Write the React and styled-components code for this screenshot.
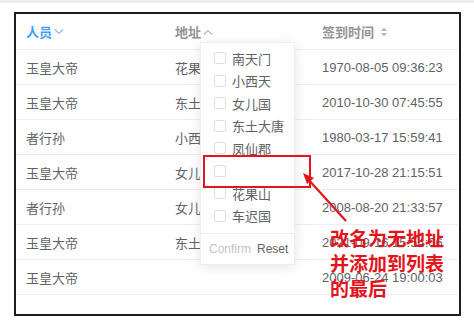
import React from 'react'
import styled, { createGlobalStyle } from 'styled-components'

const GlobalStyle = createGlobalStyle`
  body {
    margin: 0;
    background: #fff;
    font-family: "Liberation Sans", "Noto Sans CJK SC", sans-serif;
  }
`

const rows = [
  { name: '玉皇大帝', addr: '花果山', time: '1970-08-05 09:36:23' },
  { name: '玉皇大帝', addr: '东土大唐', time: '2010-10-30 07:45:55' },
  { name: '者行孙', addr: '小西天', time: '1980-03-17 15:59:41' },
  { name: '玉皇大帝', addr: '女儿国', time: '2017-10-28 21:15:51' },
  { name: '者行孙', addr: '女儿国', time: '2008-08-20 21:33:57' },
  { name: '玉皇大帝', addr: '东土大唐', time: '2021-09-16 15:54:06' },
  { name: '玉皇大帝', addr: '', time: '2009-06-24 19:00:03' },
]

const options = ['南天门', '小西天', '女儿国', '东土大唐', '凤仙郡', '', '花果山', '车迟国']

const App = () => {
  return (
    <>
      <GlobalStyle />
      <TopBar />
      <Frame>
        <Row header>
          <Cell>
            <HeadText active>人员</HeadText>
            <Chevron color="#8fb9ef" />
          </Cell>
          <Cell>
            <HeadText>地址</HeadText>
            <Chevron up color="#b4b7bd" />
          </Cell>
          <Cell>
            <HeadText>签到时间</HeadText>
            <SortCaret />
          </Cell>
        </Row>
        {rows.map((r, i) => (
          <Row key={i}>
            <Cell>{r.name}</Cell>
            <Cell>{r.addr}</Cell>
            <Cell>{r.time}</Cell>
          </Row>
        ))}

        <Popup>
          <OptionList>
            {options.map((o, i) => (
              <Option key={i}>
                <Box />
                <span>{o}</span>
              </Option>
            ))}
          </OptionList>
          <PopupFooter>
            <FooterBtn disabled>Confirm</FooterBtn>
            <FooterBtn>Reset</FooterBtn>
          </PopupFooter>
        </Popup>

        <Highlight />
        <Arrow width="60" height="60" viewBox="0 0 60 60">
          <line x1="48" y1="52" x2="9" y2="9" stroke="#e3141b" strokeWidth="2.2" />
          <polygon points="5,4 16,9 9,15" fill="#e3141b" />
        </Arrow>
        <Note>
          改名为无地址
          <br />
          并添加到列表
          <br />
          的最后
        </Note>
      </Frame>
    </>
  )
}

const Chevron = ({ up, color }) => (
  <ChevronSvg width="10" height="6" viewBox="0 0 10 6">
    <polyline
      points={up ? '1,5.5 5,1.5 9,5.5' : '1,0.5 5,4.5 9,0.5'}
      fill="none"
      stroke={color}
      strokeWidth="1.1"
    />
  </ChevronSvg>
)

const SortCaret = () => (
  <CaretSvg width="8" height="10" viewBox="0 0 8 10">
    <polygon points="4,0.5 7.5,4 0.5,4" fill="#b8bbc1" />
    <polygon points="0.5,6 7.5,6 4,9.5" fill="#b8bbc1" />
  </CaretSvg>
)

export default App

const TopBar = styled.div`
  height: 3px;
  background: #ececec;
`

const Frame = styled.div`
  position: relative;
  box-sizing: border-box;
  margin: 9px 0 0 14px;
  width: 447px;
  height: 304px;
  border: 2px solid #1e1e1e;
  padding-right: 1px;
  background: #fff;
`

const Row = styled.div`
  display: grid;
  grid-template-columns: 149px 147px 1fr;
  height: ${p => (p.header ? '36px' : '35px')};
  align-items: center;
  border-bottom: 1px solid #ebeef5;
  box-sizing: border-box;
  font-size: 13px;
  color: #606266;
`

const Cell = styled.div`
  display: flex;
  align-items: center;
  padding-left: 10px;
  white-space: nowrap;
  overflow: hidden;
`

const HeadText = styled.span`
  font-weight: bold;
  color: ${p => (p.active ? '#409eff' : '#909399')};
`

const ChevronSvg = styled.svg`
  margin-left: 2px;
  margin-top: 1px;
`

const CaretSvg = styled.svg`
  margin-left: 6px;
`

const Popup = styled.div`
  position: absolute;
  left: 184px;
  top: 28px;
  width: 95px;
  height: 223px;
  box-sizing: border-box;
  background: #fff;
  border: 1px solid #ebeef5;
  box-shadow: 0 2px 12px rgba(0, 0, 0, 0.1);
  display: flex;
  flex-direction: column;
`

const OptionList = styled.div`
  padding: 4px 0 6px;
  border-bottom: 1px solid #ebeef5;
`

const Option = styled.div`
  display: flex;
  align-items: center;
  gap: 6px;
  height: 22.5px;
  padding-left: 13px;
  font-size: 13px;
  color: #606266;
`

const Box = styled.span`
  width: 12px;
  height: 12px;
  box-sizing: border-box;
  border: 1px solid #dcdfe6;
  border-radius: 2px;
  background: #fff;
  flex-shrink: 0;
`

const PopupFooter = styled.div`
  flex: 1;
  display: flex;
  align-items: center;
  gap: 6px;
  padding-left: 8px;
`

const FooterBtn = styled.span`
  font-size: 12px;
  color: ${p => (p.disabled ? '#c0c4cc' : '#606266')};
`

const Highlight = styled.div`
  position: absolute;
  left: 187px;
  top: 141px;
  width: 108px;
  height: 33px;
  box-sizing: border-box;
  border: 2px solid #e3141b;
`

const Arrow = styled.svg`
  position: absolute;
  left: 282px;
  top: 155px;
`

const Note = styled.div`
  position: absolute;
  left: 314px;
  top: 211px;
  font-family: "Noto Sans CJK SC", sans-serif;
  font-size: 19px;
  font-weight: bold;
  line-height: 25px;
  color: #e3141b;
`
